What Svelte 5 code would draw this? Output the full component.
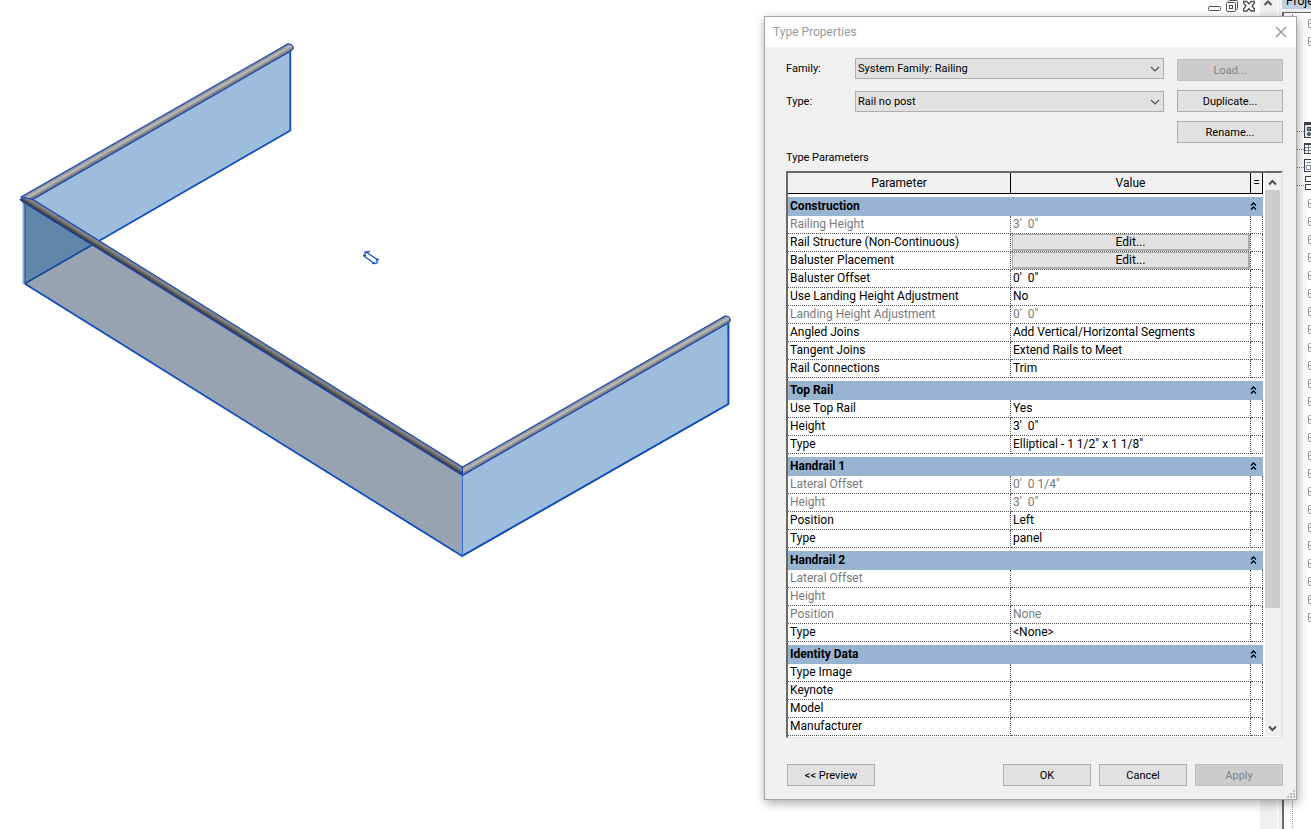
<script>
  const groups = [
    {
      name: "Construction",
      rows: [
        { name: "Railing Height", value: "3'  0\"", locked: true },
        { name: "Rail Structure (Non-Continuous)", edit: true },
        { name: "Baluster Placement", edit: true },
        { name: "Baluster Offset", value: "0'  0\"" },
        { name: "Use Landing Height Adjustment", value: "No" },
        { name: "Landing Height Adjustment", value: "0'  0\"", locked: true },
        { name: "Angled Joins", value: "Add Vertical/Horizontal Segments" },
        { name: "Tangent Joins", value: "Extend Rails to Meet" },
        { name: "Rail Connections", value: "Trim" },
      ],
    },
    {
      name: "Top Rail",
      rows: [
        { name: "Use Top Rail", value: "Yes" },
        { name: "Height", value: "3'  0\"" },
        { name: "Type", value: 'Elliptical - 1 1/2" x 1 1/8"' },
      ],
    },
    {
      name: "Handrail 1",
      rows: [
        { name: "Lateral Offset", value: "0'  0 1/4\"", locked: true },
        { name: "Height", value: "3'  0\"", locked: true },
        { name: "Position", value: "Left" },
        { name: "Type", value: "panel" },
      ],
    },
    {
      name: "Handrail 2",
      rows: [
        { name: "Lateral Offset", value: "", locked: true },
        { name: "Height", value: "", locked: true },
        { name: "Position", value: "None", locked: true },
        { name: "Type", value: "<None>" },
      ],
    },
    {
      name: "Identity Data",
      rows: [
        { name: "Type Image", value: "" },
        { name: "Keynote", value: "" },
        { name: "Model", value: "" },
        { name: "Manufacturer", value: "" },
      ],
    },
  ];

  // Rows of the browser tree, top to bottom
  const tree = [
    "node", "node", "", "", "", "",
    "legend", "schedule", "sheet", "family",
    ...Array(24).fill("node"),
  ];

  let family = "System Family: Railing";
  let type = "Rail no post";
</script>

<div class="workspace">
  <main class="canvas">
    <svg class="model" width="760" height="600" viewBox="0 0 760 600" aria-label="Railing in 3D view">
      <defs>
        <linearGradient id="railBack" gradientUnits="userSpaceOnUse" x1="150" y1="123" x2="153.5" y2="129.1">
          <stop offset="0" stop-color="#77797c" />
          <stop offset="0.5" stop-color="#bdbdbd" />
          <stop offset="1" stop-color="#6c6c6c" />
        </linearGradient>
        <linearGradient id="railRight" gradientUnits="userSpaceOnUse" x1="600" y1="387.9" x2="603.5" y2="394">
          <stop offset="0" stop-color="#77797c" />
          <stop offset="0.5" stop-color="#bdbdbd" />
          <stop offset="1" stop-color="#6c6c6c" />
        </linearGradient>
        <linearGradient id="railFront" gradientUnits="userSpaceOnUse" x1="250" y1="334.6" x2="246.3" y2="340.54">
          <stop offset="0" stop-color="#77777a" />
          <stop offset="0.35" stop-color="#858585" />
          <stop offset="1" stop-color="#303030" />
        </linearGradient>
      </defs>

      <polygon points="25,203 290,51 290,130.5 25,283.5" fill="#9ebddd" />
      <polygon points="24,203 462,475 462,556 24,283.5" fill="#97a3b0" />
      <polygon points="25,203 93,245 25,283.5" fill="#6286a9" />
      <g fill="none" stroke="#0f4cbd" stroke-width="1.8">
        <path d="M290.3 51V130.5L92 245" />
        <path d="M92 245L25 283.5" stroke="#154b9c" />
        <path d="M24.5 283.5L462 556L728.3 404V323" />
      </g>
      <path d="M23.5 202V284" stroke="#8ea9df" stroke-width="2" />
      <path d="M25 203V283" stroke="#164c9c" />
      <polygon points="462,475 728,323 728,404 462,556" fill="#9ebddd" />
      <path d="M462 556L728.3 404V323" fill="none" stroke="#0f4cbd" stroke-width="1.8" />
      <path d="M462.5 475V556" stroke="#3b6fcb" />

      <g stroke="#1747bd" stroke-width="1.1" stroke-linejoin="round">
        <path d="M21 197L288 43.8Q292 43.5 293.5 48Q292.5 50 290 51.5L32 200Z" fill="url(#railBack)" />
        <path d="M20 199.5Q22 196 33 199.5L462.5 467V475.5L23 202Z" fill="url(#railFront)" />
        <path d="M462.5 467L725 316Q729 315.5 730.5 320Q730 322 727.5 323.5L462.5 475.5Z" fill="url(#railRight)" />
      </g>

      <g fill="none" stroke="#1c50c8" stroke-width="1.3">
        <path d="M364 256L375 264M366 252L378 260" />
        <path d="M370 251.5L365 252V256M372 263.5L377 263V259" />
        <path d="M363 255.5H366M376 259.5H379" />
      </g>
    </svg>

    <div class="view-controls">
      <button aria-label="Minimize view">
        <svg width="13" height="12" viewBox="0 0 13 12"><rect x="0.5" y="6.5" width="12" height="4" rx="1" fill="#fff" stroke="#4c5058" /></svg>
      </button>
      <button aria-label="Restore view">
        <svg width="12" height="12" viewBox="0 0 12 12" fill="#fff" stroke="#4c5058">
          <rect x="2.5" y="0.5" width="9" height="9" rx="1" />
          <rect x="0.5" y="2.5" width="9" height="9" rx="1" />
          <rect x="3.5" y="5.5" width="3" height="3" />
        </svg>
      </button>
      <button aria-label="Close view">
        <svg width="12" height="12" viewBox="0 0 12 12">
          <path d="M0.5 1.5H4L6 4L8 1.5H11.5V3L9 6L11.5 9V11H8L6 8.5L4 11H0.5V9L3 6L0.5 3Z" fill="#fff" stroke="#4c5058" stroke-width="1.3" />
        </svg>
      </button>
    </div>
  </main>

  <div class="view-scroll">
    <svg width="10" height="8" viewBox="0 0 10 8"><path d="M1.5 5L5 1.5L8.5 5" fill="none" stroke="#555" stroke-width="2" /></svg>
  </div>

  <aside class="browser">
    <div class="browser-title">Project Browser</div>
    <ul class="tree">
      {#each tree as kind}
        <li>
          {#if kind === "node"}
            <svg class="expander" width="9" height="9" viewBox="0 0 9 9">
              <rect x="0.5" y="0.5" width="8" height="8" rx="1" fill="#fafafa" stroke="#919191" />
              <path d="M2 4.5H7" stroke="#4054a8" />
            </svg>
          {:else if kind}
            <span class="branch"></span>
            <svg width="14" height="18" viewBox="0 0 14 18" fill="#fff" stroke="#3b414c">
              {#if kind === "legend"}
                <rect x="0.5" y="0.5" width="13" height="15" fill="#e4e6ea" />
                <path d="M0 1.5H14" stroke-width="3" />
                <rect x="3.5" y="5.5" width="3" height="3" fill="#8a929e" />
                <circle cx="5" cy="12" r="1.5" fill="#6a7482" />
              {:else if kind === "schedule"}
                <rect x="0.5" y="3.5" width="13" height="10" />
                <path d="M0 4H14" stroke-width="2" />
                <path d="M1 7.500H13M1 10.500H13M4.500 5V13M8.500 5V13" stroke="#77808e" />
              {:else if kind === "sheet"}
                <rect x="0.5" y="1.500" width="13" height="12" />
                <path d="M2.500 4.500H12M2.500 7.500H6.500V11.500H2.500Z" fill="none" stroke="#7787a0" />
              {:else}
                <rect x="1.500" y="0.500" width="12" height="5" />
                <rect x="1.500" y="8.500" width="12" height="5" />
              {/if}
            </svg>
          {/if}
        </li>
      {/each}
    </ul>
  </aside>

  <section class="dialog" role="dialog" aria-labelledby="dialogTitle">
    <header class="title-bar">
      <span id="dialogTitle">Type Properties</span>
      <button class="close" aria-label="Close">
        <svg width="12" height="12" viewBox="0 0 12 12"><path d="M1 1L11 11M11 1L1 11" stroke="#8c8c8c" stroke-width="1.1" /></svg>
      </button>
    </header>

    <div class="content">
      <div class="type-form">
        <div class="fields">
          <div class="field">
            <label for="family">Family:</label>
            <div class="select-box">
              <select id="family" bind:value={family}>
                <option>System Family: Railing</option>
              </select>
              <svg class="chevron" width="10" height="6" viewBox="0 0 10 6"><path d="M1 1L5 5L9 1" fill="none" stroke="#505050" stroke-width="1.2" /></svg>
            </div>
          </div>
          <div class="field">
            <label for="type">Type:</label>
            <div class="select-box">
              <select id="type" bind:value={type}>
                <option>Rail no post</option>
              </select>
              <svg class="chevron" width="10" height="6" viewBox="0 0 10 6"><path d="M1 1L5 5L9 1" fill="none" stroke="#505050" stroke-width="1.2" /></svg>
            </div>
          </div>
        </div>
        <div class="side-buttons">
          <button class="btn" disabled>Load...</button>
          <button class="btn">Duplicate...</button>
          <button class="btn">Rename...</button>
        </div>
      </div>

      <div class="caption" id="paramCaption">Type Parameters</div>

      <div class="grid-frame">
        <table aria-labelledby="paramCaption">
          <colgroup>
            <col class="col-name" />
            <col />
            <col class="col-eq" />
          </colgroup>
          <thead>
            <tr>
              <th>Parameter</th>
              <th>Value</th>
              <th>=</th>
            </tr>
          </thead>
          {#each groups as group}
            <tbody>
              <tr class="group">
                <th colspan="3">
                  <div class="group-head">
                    {group.name}
                    <svg width="7" height="8" viewBox="0 0 7 8"><path d="M1 3.5L3.5 1L6 3.5M1 7.5L3.5 5L6 7.5" fill="none" stroke="#000" stroke-width="1.4" /></svg>
                  </div>
                </th>
              </tr>
              {#each group.rows as row}
                <tr class:locked={row.locked}>
                  <td>{row.name}</td>
                  {#if row.edit}
                    <td class="edit-cell"><button class="edit">Edit...</button></td>
                  {:else}
                    <td>{row.value}</td>
                  {/if}
                  <td></td>
                </tr>
              {/each}
            </tbody>
          {/each}
        </table>

        <div class="scrollbar">
          <svg width="15" height="17" viewBox="0 0 15 17"><path d="M4 11.5L7.5 8L11 11.5" fill="none" stroke="#505050" stroke-width="2" /></svg>
          <div class="track"><div class="thumb"></div></div>
          <svg width="15" height="17" viewBox="0 0 15 17"><path d="M4 7.5L7.5 11L11 7.5" fill="none" stroke="#505050" stroke-width="2" /></svg>
        </div>
      </div>

      <footer class="actions">
        <button class="btn preview">&lt;&lt; Preview</button>
        <button class="btn">OK</button>
        <button class="btn">Cancel</button>
        <button class="btn" disabled>Apply</button>
      </footer>
    </div>

    <svg class="grip" width="8" height="8" viewBox="0 0 8 8" fill="#bfbfbf">
      <path d="M6 0h2v2h-2zM3 3h2v2h-2zM6 3h2v2h-2zM0 6h2v2h-2zM3 6h2v2h-2zM6 6h2v2h-2z" />
    </svg>
  </section>
</div>

<style>
  :global(body) {
    margin: 0;
    background: #fff;
  }

  .workspace {
    position: relative;
    display: flex;
    min-height: 100vh;
    overflow: hidden;
    font-family: Roboto, "Open Sans", sans-serif;
    font-size: 11px;
    color: #000;
  }

  .workspace * {
    box-sizing: border-box;
  }

  button,
  select {
    font: inherit;
    color: inherit;
    margin: 0;
    padding: 0;
  }

  svg {
    display: block;
    flex: none;
  }

  .canvas {
    flex: 1;
    min-width: 0;
    display: flex;
    justify-content: space-between;
    align-items: flex-start;
  }

  .view-controls {
    display: flex;
    gap: 5px;
    padding-right: 5px;
  }

  .view-controls button {
    border: none;
    background: none;
  }

  .view-scroll {
    width: 17px;
    padding-left: 3px;
    background: #f0f0f0;
  }

  .browser {
    width: 34px;
    display: flex;
    flex-direction: column;
    overflow: hidden;
    background: #f0f0f0;
    padding-left: 4px;
    border-left: 1px solid #fff;
  }

  .browser-title {
    height: 9px;
    margin-bottom: 3px;
    padding-left: 4px;
    line-height: 3px;
    font-size: 12px;
    white-space: nowrap;
    background: #bfcfe3;
  }

  .tree {
    flex: 1;
    margin: 0;
    padding: 1px 0 0 8px;
    list-style: none;
    background: #fff;
    border-top: 1px solid #696969;
    border-left: 2px solid #696969;
  }

  .tree li {
    display: flex;
    align-items: center;
    height: 18px;
    border-left: 1px dotted #999;
  }

  .tree::after {
    content: "";
    display: block;
    height: 220px;
    border-left: 1px dotted #999;
  }

  .expander {
    margin-left: 15px;
  }

  .branch {
    flex: none;
    width: 11px;
    border-top: 1px dotted #888;
  }

  .dialog {
    position: absolute;
    top: 16px;
    right: 14px;
    width: 533px;
    background: #f0f0f0;
    border: 1px solid #a5a5a5;
    box-shadow: 1px 3px 10px rgba(0, 0, 0, 0.35);
  }

  .title-bar {
    display: flex;
    justify-content: space-between;
    align-items: center;
    height: 30px;
    padding: 0 9px 0 8px;
    background: #fff;
    color: #999;
    font-size: 12px;
  }

  .close {
    border: none;
    background: none;
  }

  .content {
    padding: 11px 13px 13px 21px;
  }

  .type-form {
    display: flex;
    gap: 13px;
  }

  .fields {
    flex: 1;
    display: flex;
    flex-direction: column;
    gap: 12px;
  }

  .field {
    display: flex;
    align-items: center;
  }

  .field label {
    width: 69px;
  }

  .select-box {
    position: relative;
    flex: 1;
  }

  select {
    display: block;
    width: 100%;
    height: 21px;
    padding: 0 20px 0 2px;
    appearance: none;
    background: #e1e1e1;
    border: 1px solid #adadad;
    border-radius: 0;
  }

  .chevron {
    position: absolute;
    top: 8px;
    right: 4px;
    pointer-events: none;
  }

  .side-buttons {
    display: flex;
    flex-direction: column;
    gap: 9px;
    width: 106px;
    padding-top: 1px;
  }

  .btn {
    height: 22px;
    background: #e1e1e1;
    border: 1px solid #adadad;
  }

  .btn:disabled {
    background: #ccc;
    border-color: #bfbfbf;
    color: #838383;
  }

  .caption {
    padding: 7px 0 5px;
    line-height: 16px;
  }

  .grid-frame {
    display: flex;
    gap: 2px;
    background: #fff;
    border-style: solid;
    border-width: 2px 2px 1px 2px;
    border-color: #696969 #e3e3e3 #e3e3e3 #696969;
    padding-bottom: 1px;
  }

  table {
    flex: 1;
    table-layout: fixed;
    border-spacing: 0;
    font-size: 12px;
  }

  .col-name {
    width: 223px;
  }

  .col-eq {
    width: 12px;
  }

  th,
  td {
    padding: 0;
  }

  thead th {
    height: 21px;
    line-height: 20px;
    font-weight: 400;
    background: #f0f0f0;
    border-right: 1px solid #000;
    border-bottom: 1px solid #000;
  }

  .group th {
    border-top: 3px solid #fff;
    background: #99b4d1;
    text-align: left;
  }

  .group-head {
    display: flex;
    justify-content: space-between;
    align-items: center;
    height: 19px;
    padding: 0 6px 1px 2px;
  }

  td {
    height: 18px;
    padding: 0 0 1px 2px;
    line-height: 16px;
    white-space: pre;
    border-right: 1px dotted #555;
    border-bottom: 1px dotted #555;
  }

  .locked td {
    color: #7a7a7a;
  }

  .edit-cell {
    padding: 0 0 0 1px;
  }

  .edit {
    display: block;
    width: 100%;
    height: 17px;
    line-height: 14px;
    background: #e1e1e1;
    border: 1px solid #adadad;
    border-bottom-width: 2px;
    border-right-width: 2px;
  }

  .scrollbar {
    display: flex;
    flex-direction: column;
    width: 16px;
    background: #f0f0f0;
  }

  .track {
    flex: 1;
  }

  .thumb {
    width: 15px;
    height: 79%;
    background: #cdcdcd;
  }

  .actions {
    display: flex;
    gap: 8px;
    padding-top: 26px;
    padding-left: 1px;
  }

  .actions .btn {
    width: 88px;
  }

  .preview {
    margin-right: auto;
  }

  .grip {
    position: absolute;
    right: 1px;
    bottom: 1px;
  }
</style>
